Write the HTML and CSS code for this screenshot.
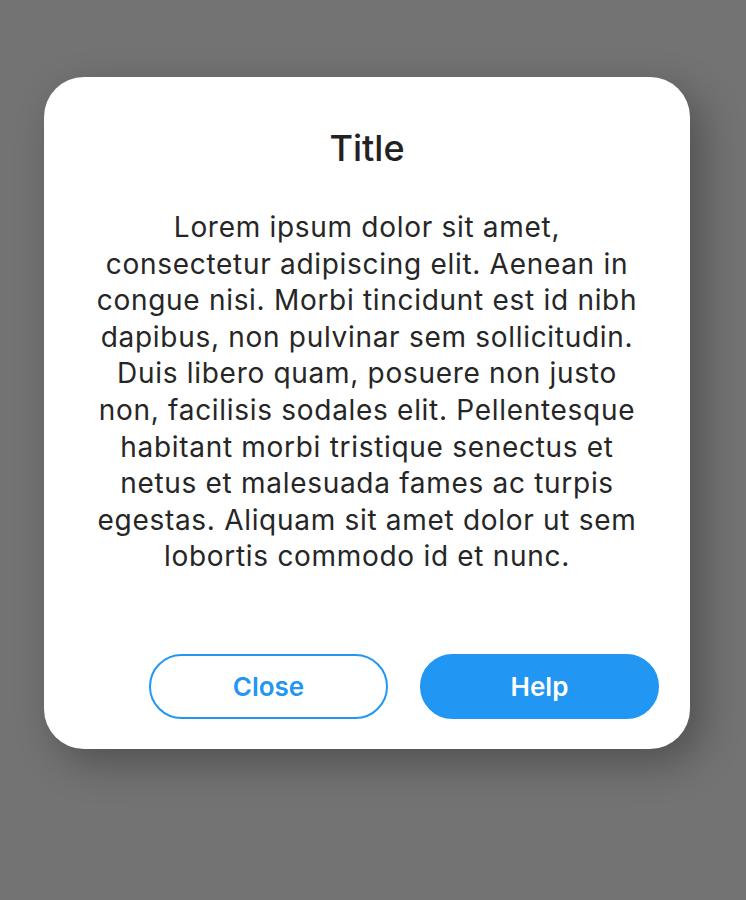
FILE: index.html
```html
<!DOCTYPE html>
<html lang="en">
<head>
    <meta charset="UTF-8">
    <title>Dialog</title>
    <link rel="stylesheet" href="styles.css">
</head>
<body>
    <div class="dialog">
        <h2 class="dialog-title">Title</h2>
        <p class="dialog-text">Lorem ipsum dolor sit amet, consectetur adipiscing elit. Aenean in congue nisi. Morbi tincidunt est id nibh dapibus, non pulvinar sem sollicitudin. Duis libero quam, posuere non justo non, facilisis sodales elit. Pellentesque habitant morbi tristique senectus et netus et malesuada fames ac turpis egestas. Aliquam sit amet dolor ut sem lobortis commodo id et nunc.</p>
        <div class="dialog-actions">
            <button class="btn btn-outline">Close</button>
            <button class="btn btn-filled">Help</button>
        </div>
    </div>
</body>
</html>
```

FILE: styles.css
```css
body {
    margin: 0;
    padding: 77px 0 0 44px;
    background-color: #737373;
    font-family: Inter, "Noto Sans", sans-serif;
    height: 100vh;
    box-sizing: border-box;
}
.dialog {
    width: 646px;
    height: 672px;
    box-sizing: border-box;
    background-color: #fff;
    border-radius: 40px;
    box-shadow: 12px 14px 40px rgba(0, 0, 0, 0.3);
    display: flex;
    flex-direction: column;
    padding: 50px 31px 30px 31px;
}
.dialog-title {
    margin: 0;
    text-align: center;
    font-size: 36px;
    line-height: 42px;
    font-weight: 500;
    color: #222;
}
.dialog-text {
    margin: 40px 18px 0 18px;
    text-align: center;
    font-size: 28px;
    line-height: 36.6px;
    letter-spacing: 0.7px;
    color: #262626;
}
.dialog-actions {
    margin-top: auto;
    display: flex;
    justify-content: flex-end;
    gap: 32px;
}
.btn {
    width: 239px;
    height: 65px;
    border-radius: 33px;
    font-family: inherit;
    font-size: 26px;
    font-weight: 600;
    cursor: pointer;
}
.btn-outline {
    background-color: #fff;
    border: 2px solid #2196f3;
    color: #2196f3;
}
.btn-filled {
    background-color: #2196f3;
    border: 2px solid #2196f3;
    color: #fff;
}
```
